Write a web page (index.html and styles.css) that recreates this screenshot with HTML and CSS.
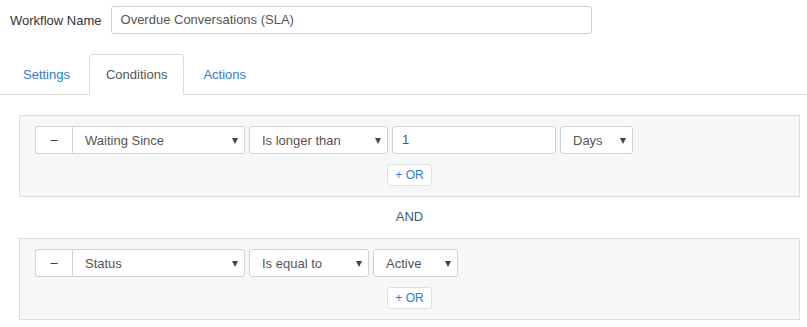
FILE: index.html
```html
<!DOCTYPE html>
<html>
<head>
<meta charset="utf-8">
<link rel="stylesheet" href="styles.css">
</head>
<body>
<div class="header">
  <label class="name-label">Workflow Name</label>
  <div class="text-input name-input">Overdue Conversations (SLA)</div>
</div>
<ul class="tabs">
  <li><a class="tab">Settings</a></li>
  <li><a class="tab active">Conditions</a></li>
  <li><a class="tab">Actions</a></li>
</ul>
<div class="content">
  <div class="panel">
    <div class="cond-row">
      <div class="group">
        <div class="minus">&ndash;</div>
        <div class="select group-select w-field"><span>Waiting Since</span><i class="caret"></i></div>
      </div>
      <div class="select w-op1"><span>Is longer than</span><i class="caret"></i></div>
      <div class="text-input w-val">1</div>
      <div class="select w-unit"><span>Days</span><i class="caret"></i></div>
    </div>
    <div class="or-wrap"><button class="or-btn">+ OR</button></div>
  </div>
  <div class="and">AND</div>
  <div class="panel">
    <div class="cond-row">
      <div class="group">
        <div class="minus">&ndash;</div>
        <div class="select group-select w-field"><span>Status</span><i class="caret"></i></div>
      </div>
      <div class="select w-op2"><span>Is equal to</span><i class="caret"></i></div>
      <div class="select w-status"><span>Active</span><i class="caret"></i></div>
    </div>
    <div class="or-wrap"><button class="or-btn">+ OR</button></div>
  </div>
</div>
</body>
</html>
```

FILE: styles.css
```css
* { box-sizing: border-box; }
html, body { margin: 0; padding: 0; background: #fff; }
body {
  font-family: "Liberation Sans", Arial, sans-serif;
  font-size: 13px;
  color: #333;
}
.header {
  display: flex;
  align-items: center;
  gap: 9px;
  padding: 6px 0 0 10px;
}
.name-label { color: #333; }
.text-input {
  height: 28px;
  border: 1px solid #cbd2d9;
  border-radius: 3px;
  background: #fff;
  color: #555;
  line-height: 26px;
  padding: 0 9px;
}
.name-input { width: 481px; }

.tabs {
  list-style: none;
  margin: 20px 0 0 0;
  padding: 0 0 0 6px;
  display: flex;
  border-bottom: 1px solid #ddd;
}
.tabs li { margin-right: 2px; margin-bottom: -1px; }
.tab {
  display: block;
  padding: 0 16px;
  line-height: 39px;
  border: 1px solid transparent;
  border-radius: 4px 4px 0 0;
  color: #2f7bd0;
}
.tab.active {
  color: #555;
  background: #fff;
  border-color: #ddd;
  border-bottom-color: #fff;
}

.content { padding: 20px 7px 0 19px; }
.panel {
  background: #f6f7f7;
  border: 1px solid #dcdfe1;
  padding: 10px 15px 10px 15px;
}
.cond-row {
  display: flex;
  gap: 4px;
  height: 28px;
}
.group { display: flex; }
.minus {
  width: 37px;
  height: 28px;
  border: 1px solid #cbd2d9;
  border-right: none;
  border-radius: 3px 0 0 3px;
  background: #fff;
  color: #333;
  text-align: center;
  line-height: 25px;
}
.select {
  height: 28px;
  border: 1px solid #cbd2d9;
  border-radius: 3px;
  background: #fff;
  color: #555;
  display: flex;
  align-items: center;
  justify-content: space-between;
  padding: 0 6px 0 12px;
}
.group-select { border-radius: 0 3px 3px 0; }
.caret {
  display: block;
  width: 0;
  height: 0;
  border-left: 3px solid transparent;
  border-right: 3px solid transparent;
  border-top: 6px solid #444;
  margin-top: 1px;
}
.cond-row .text-input { height: 28px; line-height: 26px; }
.w-field { width: 173px; }
.w-op1 { width: 139px; }
.w-val { width: 164px; }
.w-unit { width: 73px; }
.w-op2 { width: 120px; }
.w-status { width: 85px; }

.or-wrap {
  display: flex;
  justify-content: center;
  margin-top: 10px;
}
.or-btn {
  font-family: "Liberation Sans", Arial, sans-serif;
  font-size: 12px;
  height: 22px;
  width: 45px;
  padding: 0;
  border: 1px solid #dde1e4;
  border-radius: 3px;
  background: #fff;
  color: #2f7bd0;
}
.and {
  height: 41px;
  line-height: 40px;
  text-align: center;
  color: #3d5a74;
}
```
